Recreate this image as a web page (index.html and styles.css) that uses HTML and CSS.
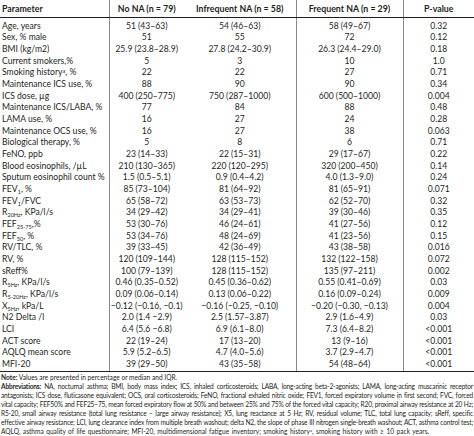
FILE: index.html
```html
<!DOCTYPE html>
<html>
<head>
<meta charset="utf-8">
<link rel="stylesheet" href="styles.css">
</head>
<body>
<table class="tbl">
<colgroup>
<col class="c1"><col class="c2"><col class="c3"><col class="c4"><col class="c5">
</colgroup>
<thead>
<tr><th class="param">Parameter</th><th class="sep">No NA (n = 79)</th><th>Infrequent NA (n = 58)</th><th class="sep">Frequent NA (n = 29)</th><th class="sep">P-value</th></tr>
</thead>
<tbody>
<tr><td class="param">Age, years</td><td class="sep">51 (43–63)</td><td>54 (46–63)</td><td class="sep">58 (49–67)</td><td class="sep">0.32</td></tr>
<tr><td class="param">Sex, % male</td><td class="sep">51</td><td>55</td><td class="sep">72</td><td class="sep">0.12</td></tr>
<tr><td class="param">BMI (kg/m2)</td><td class="sep">25.9 (23.8–28.9)</td><td>27.8 (24.2–30.9)</td><td class="sep">26.3 (24.4–29.0)</td><td class="sep">0.18</td></tr>
<tr><td class="param">Current smokers,%</td><td class="sep">5</td><td>3</td><td class="sep">10</td><td class="sep">1.0</td></tr>
<tr><td class="param">Smoking history<sup>a</sup>, %</td><td class="sep">22</td><td>22</td><td class="sep">27</td><td class="sep">0.71</td></tr>
<tr><td class="param">Maintenance ICS use, %</td><td class="sep">88</td><td>90</td><td class="sep">90</td><td class="sep">0.34</td></tr>
<tr><td class="param">ICS dose, µg</td><td class="sep">400 (250–775)</td><td>750 (287–1000)</td><td class="sep">600 (500–1000)</td><td class="sep">0.004</td></tr>
<tr><td class="param">Maintenance ICS/LABA, %</td><td class="sep">77</td><td>84</td><td class="sep">88</td><td class="sep">0.48</td></tr>
<tr><td class="param">LAMA use, %</td><td class="sep">16</td><td>27</td><td class="sep">24</td><td class="sep">0.28</td></tr>
<tr><td class="param">Maintenance OCS use, %</td><td class="sep">16</td><td>27</td><td class="sep">38</td><td class="sep">0.063</td></tr>
<tr><td class="param">Biological therapy, %</td><td class="sep">5</td><td>8</td><td class="sep">6</td><td class="sep">0.71</td></tr>
<tr><td class="param">FeNO, ppb</td><td class="sep">23 (14–33)</td><td>22 (15–31)</td><td class="sep">29 (17–67)</td><td class="sep">0.22</td></tr>
<tr><td class="param">Blood eosinophils, /µL</td><td class="sep">210 (130–365)</td><td>220 (120–295)</td><td class="sep">320 (200–450)</td><td class="sep">0.14</td></tr>
<tr><td class="param">Sputum eosinophil count %</td><td class="sep">1.5 (0.5–5.1)</td><td>0.9 (0.4–4.2)</td><td class="sep">4.0 (1.3–9.0)</td><td class="sep">0.24</td></tr>
<tr><td class="param">FEV<sub>1</sub>, %</td><td class="sep">85 (73–104)</td><td>81 (64–92)</td><td class="sep">81 (65–91)</td><td class="sep">0.071</td></tr>
<tr><td class="param">FEV<sub>1</sub>/FVC</td><td class="sep">65 (58–72)</td><td>63 (53–73)</td><td class="sep">62 (52–70)</td><td class="sep">0.32</td></tr>
<tr><td class="param">R<sub>20Hz</sub>, KPa/l/s</td><td class="sep">34 (29–42)</td><td>34 (29–41)</td><td class="sep">39 (30–46)</td><td class="sep">0.35</td></tr>
<tr><td class="param">FEF<sub>25-75</sub>,%</td><td class="sep">53 (30–76)</td><td>46 (24–61)</td><td class="sep">41 (27–56)</td><td class="sep">0.12</td></tr>
<tr><td class="param">FEF<sub>50</sub>, %</td><td class="sep">53 (34–76)</td><td>48 (24–69)</td><td class="sep">41 (23–56)</td><td class="sep">0.15</td></tr>
<tr><td class="param">RV/TLC, %</td><td class="sep">39 (33–45)</td><td>42 (36–49)</td><td class="sep">43 (38–58)</td><td class="sep">0.016</td></tr>
<tr><td class="param">RV, %</td><td class="sep">120 (109–144)</td><td>128 (115–152)</td><td class="sep">132 (122–158)</td><td class="sep">0.072</td></tr>
<tr><td class="param">sReff%</td><td class="sep">100 (79–139)</td><td>128 (115–152)</td><td class="sep">135 (97–211)</td><td class="sep">0.002</td></tr>
<tr><td class="param">R<sub>5Hz</sub>, KPa/l/s</td><td class="sep">0.46 (0.35–0.52)</td><td>0.45 (0.36–0.62)</td><td class="sep">0.55 (0.41–0.69)</td><td class="sep">0.03</td></tr>
<tr><td class="param">R<sub>5-20Hz</sub>, KPa/l/s</td><td class="sep">0.09 (0.06–0.14)</td><td>0.13 (0.06–0.22)</td><td class="sep">0.16 (0.09–0.24)</td><td class="sep">0.009</td></tr>
<tr><td class="param">X<sub>5Hz</sub>, kPa/L</td><td class="sep">−0.12 (−0.16, −0.1)</td><td>−0.16 (−0.25, −0.10)</td><td class="sep">−0.20 (−0.30, −0.13)</td><td class="sep">0.004</td></tr>
<tr><td class="param">N2 Delta /l</td><td class="sep">2.0 (1.4 −2.9)</td><td>2.5 (1.57–3.87)</td><td class="sep">2.9 (1.6–4.9)</td><td class="sep">0.03</td></tr>
<tr><td class="param">LCI</td><td class="sep">6.4 (5.6 −6.8)</td><td>6.9 (6.1–8.0)</td><td class="sep">7.3 (6.4–8.2)</td><td class="sep">&lt;0.001</td></tr>
<tr><td class="param">ACT score</td><td class="sep">22 (19–24)</td><td>17 (13–20)</td><td class="sep">13 (9–16)</td><td class="sep">&lt;0.001</td></tr>
<tr><td class="param">AQLQ mean score</td><td class="sep">5.9 (5.2–6.5)</td><td>4.7 (4.0–5.6)</td><td class="sep">3.7 (2.9–4.7)</td><td class="sep">&lt;0.001</td></tr>
<tr><td class="param">MFI-20</td><td class="sep">39 (29–50)</td><td>43 (35–58)</td><td class="sep">54 (48–64)</td><td class="sep">&lt;0.001</td></tr>
</tbody>
</table>
<div class="notes">
<div class="note"><b>Note:</b> Values are presented in percentage or median and IQR.</div>
<div class="jl"><b>Abbreviations:</b> NA, nocturnal asthma; BMI, body mass index; ICS, inhaled corticosteroids; LABA, long-acting beta-2-agonists; LAMA, long-acting muscarinic receptor</div>
<div class="jl">antagonists; ICS dose, fluticasone equivalent; OCS, oral corticosteroids; FeNO, fractional exhaled nitric oxide; FEV1, forced expiratory volume in first second; FVC, forced</div>
<div class="jl">vital capacity; FEF50% and FEF25–75, mean forced expiratory flow at 50% and between 25% and 75% of the forced vital capacity; R20, proximal airway resistance at 20 Hz;</div>
<div class="jl">R5-20, small airway resistance (total lung resistance – large airway resistance); X5, lung reactance at 5 Hz; RV, residual volume; TLC, total lung capacity; sReff, specific</div>
<div class="jl">effective airway resistance; LCI, lung clearance index from multiple breath washout; delta N2, the slope of phase III nitrogen single-breath washout; ACT, asthma control test;</div>
<div class="last">AQLQ, asthma quality of life questionnaire; MFI-20, multidimensional fatigue inventory; smoking history<sup>a</sup>, smoking history with ≥ 10 pack years.</div>
</div>
</body>
</html>
```

FILE: styles.css
```css
body {
  margin: 0;
  background: #ffffff;
  color: #231f20;
  font-family: Lato, "Liberation Sans", sans-serif;
}
.tbl {
  border-collapse: collapse;
  table-layout: fixed;
  width: 474px;
  font-size: 8.6px;
}
.c1 { width: 109px; }
.c2 { width: 75px; }
.c3 { width: 112px; }
.c4 { width: 107px; }
.c5 { width: 71px; }
.tbl th {
  height: 17px;
  padding: 0;
  font-size: 8.8px;
  font-weight: bold;
  text-align: center;
  vertical-align: middle;
  border-bottom: 1px solid #231f20;
  white-space: nowrap;
}
.tbl td {
  height: 11.67px;
  line-height: 11.67px;
  padding: 0;
  text-align: center;
  white-space: nowrap;
}
.tbl .param {
  text-align: left;
  padding-left: 2px;
}
.tbl .sep {
  border-left: 1px solid #8a8a8a;
}
.tbl tbody tr:first-child td {
  padding-top: 2.5px;
}
.tbl tbody tr:last-child td {
  border-bottom: 1px solid #231f20;
}
sub {
  font-size: 0.65em;
  line-height: 0;
  vertical-align: -0.3em;
}
sup {
  font-size: 0.65em;
  line-height: 0;
  vertical-align: 0.4em;
}
.notes {
  font-size: 6.6px;
  line-height: 9px;
  padding: 1px 1px 0 1px;
}
.jl {
  letter-spacing: -0.18px;
  word-spacing: -0.8px;
  text-align: justify;
  text-align-last: justify;
}
.last {
  word-spacing: 0.8px;
}
```
